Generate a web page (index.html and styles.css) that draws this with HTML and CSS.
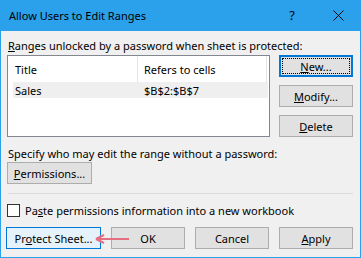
FILE: index.html
```html
<!DOCTYPE html>
<html lang="en">
  <head>
    <meta charset="UTF-8" />
    <title>Allow Users to Edit Ranges</title>
    <link rel="stylesheet" href="styles.css">
  </head>
  <body>
    <div class="window">
      <!-- Title bar -->
      <div class="titlebar">
        <span class="title">Allow Users to Edit Ranges</span>
        <span class="help">?</span>
        <svg class="close" width="11" height="11" viewBox="0 0 11 11">
          <path d="M0.5 0.5 L10.5 10.5 M10.5 0.5 L0.5 10.5" stroke="#000" stroke-width="1" fill="none" />
        </svg>
      </div>

      <div class="content">
        <div class="label"><u>R</u>anges unlocked by a password when sheet is protected:</div>

        <div class="ranges">
          <div class="listview">
            <div class="lv-head">
              <div class="col col-title">Title</div>
              <div class="col col-ref">Refers to cells</div>
            </div>
            <div class="lv-row">
              <div class="col col-title">Sales</div>
              <div class="col col-ref">$B$2:$B$7</div>
            </div>
          </div>

          <div class="side-buttons">
            <button class="btn btn-default"><u>N</u>ew...</button>
            <button class="btn"><u>M</u>odify...</button>
            <button class="btn"><u>D</u>elete</button>
          </div>
        </div>

        <div class="label label-specify">Specify who may edit the range without a password:</div>
        <button class="btn btn-permissions"><u>P</u>ermissions...</button>

        <div class="separator"></div>

        <label class="check-row">
          <span class="checkbox"></span>
          <span>Pa<u>s</u>te permissions information into a new workbook</span>
        </label>

        <div class="bottom-buttons">
          <button class="btn btn-hover btn-protect">Pr<u>o</u>tect Sheet...</button>
          <button class="btn">OK</button>
          <button class="btn">Cancel</button>
          <button class="btn"><u>A</u>pply</button>
        </div>
      </div>

      <!-- callout arrow -->
      <svg class="arrow" width="36" height="12" viewBox="0 0 36 12">
        <path d="M2 6 L35 6 M2 6 L10 2 M2 6 L10 10" stroke="#e46f80" stroke-width="2" fill="none" />
      </svg>
    </div>
  </body>
</html>
```

FILE: styles.css
```css
/* General */
html,
body {
  margin: 0;
  background: #f0f0f0;
}

.window {
  position: relative;
  box-sizing: border-box;
  width: 361px;
  height: 258px;
  border: 1px solid #2ba1ec;
  border-top: none;
  background: #f0f0f0;
  font-family: "Noto Sans", sans-serif;
  font-size: 11px;
  line-height: 15px;
  color: #000;
}

/* Title bar */
.titlebar {
  display: flex;
  align-items: center;
  height: 31px;
  margin: 0 -1px;
  padding-left: 9px;
  background: #2ba1ec;
}

.help {
  margin-left: auto;
  margin-right: 38px;
  font-size: 13px;
}

.close {
  margin-right: 17px;
}

/* Content */
.content {
  padding: 7px 7px 0 6px;
}

.label {
  height: 15px;
  padding-left: 1px;
}

.ranges {
  display: flex;
  gap: 9px;
  margin-top: 2px;
}

.listview {
  box-sizing: border-box;
  width: 263px;
  height: 82px;
  border: 1px solid #828790;
  background: #fff;
}

.lv-head {
  display: grid;
  grid-template-columns: 129px 130px;
  height: 26px;
}

.lv-head .col {
  display: flex;
  align-items: center;
}

.lv-head .col-title {
  padding-left: 7px;
}

.lv-head .col-ref {
  border-left: 1px solid #e5e5e5;
  border-right: 1px solid #e5e5e5;
  padding-left: 6px;
}

.lv-row {
  display: grid;
  grid-template-columns: 124px 1fr;
  width: 255px;
  height: 16px;
  margin-left: 5px;
  align-items: center;
  background: #efefef;
}

.lv-row .col-title {
  padding-left: 2px;
}

.lv-row .col-ref {
  padding-left: 7px;
}

/* Buttons */
.btn {
  box-sizing: border-box;
  width: 74px;
  height: 22px;
  padding: 0;
  border: 1px solid #adadad;
  background: #e1e1e1;
  font-family: "Noto Sans", sans-serif;
  font-size: 11px;
  line-height: 15px;
  color: #000;
}

.btn-default {
  border: 2px solid #0078d7;
  outline: 1px dotted #000;
  outline-offset: -4px;
}

.btn-hover {
  border-color: #0078d7;
  background: #e5f1fb;
}

.side-buttons {
  display: flex;
  flex-direction: column;
  gap: 8px;
}

.label-specify {
  margin-top: 9px;
}

.btn-permissions {
  display: block;
  width: 85px;
  margin-top: 1px;
}

.separator {
  height: 1px;
  margin: 9px 0 0 1px;
  background: #dadada;
}

.check-row {
  display: flex;
  align-items: center;
  gap: 5px;
  height: 15px;
  margin-top: 9px;
}

.checkbox {
  box-sizing: border-box;
  width: 13px;
  height: 13px;
  border: 1px solid #333;
  background: #fff;
}

.bottom-buttons {
  display: flex;
  gap: 10px;
  margin: 9px 0 0 -1px;
}

.btn-protect {
  width: 95px;
}

/* Callout */
.arrow {
  position: absolute;
  left: 93px;
  top: 233px;
}
```
